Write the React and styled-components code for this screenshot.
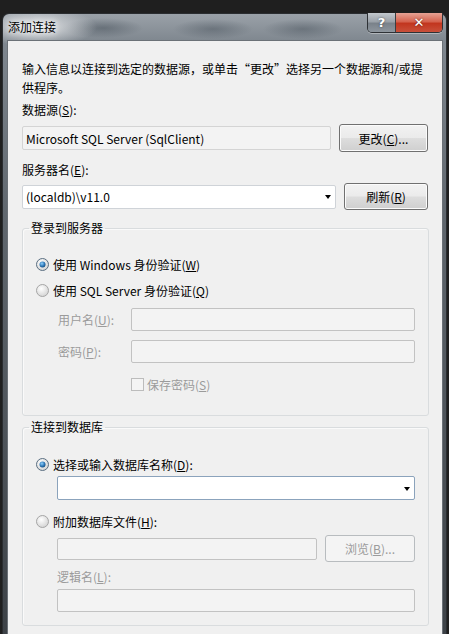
import React from 'react';
import styled, { createGlobalStyle } from 'styled-components';

const GlobalStyle = createGlobalStyle`
    html, body {
        margin: 0;
        padding: 0;
        background: #1f1f1f;
    }
    body {
        width: 449px;
        height: 634px;
        overflow: hidden;
        font-family: 'Noto Sans CJK SC', sans-serif;
        font-size: 12px;
        color: #000;
    }
    * {
        box-sizing: border-box;
    }
`;

const Window = styled.div`
    margin: 13px 0 0 2px;
    width: 445px;
    height: 621px;
    display: flex;
    flex-direction: column;
    border: 1px solid #2a2d30;
    border-bottom: none;
    border-radius: 7px 7px 0 0;
    padding: 0 3px 0 4px;
    background:
        radial-gradient(ellipse 60px 20px at 34px 13px, rgba(232, 234, 236, 0.95), rgba(232, 234, 236, 0)),
        radial-gradient(ellipse 40px 10px at 100px 14px, rgba(60, 70, 80, 0.45), rgba(60, 70, 80, 0)),
        radial-gradient(ellipse 40px 10px at 210px 15px, rgba(60, 70, 80, 0.4), rgba(60, 70, 80, 0)),
        radial-gradient(ellipse 40px 10px at 300px 15px, rgba(60, 70, 80, 0.4), rgba(60, 70, 80, 0)),
        linear-gradient(to bottom, #9aa1a8 0px, #7f878f 27px, #60676e 200px, #3d4247 100%);
`;

const TitleBar = styled.div`
    height: 26px;
    flex: none;
    display: flex;
    justify-content: space-between;
    align-items: flex-start;
`;

const Title = styled.div`
    padding-left: 1px;
    line-height: 26px;
    font-size: 12px;
    color: #000;
    text-shadow: 0 0 6px #fff, 0 0 10px rgba(255, 255, 255, 0.9);
`;

const CaptionButtons = styled.div`
    display: flex;
    margin-top: -1px;
    border: 1px solid #2e3236;
    border-top: none;
    border-radius: 0 0 5px 5px;
    overflow: hidden;
    box-shadow: 0 1px 0 rgba(255, 255, 255, 0.35);
`;

const CaptionButton = styled.div`
    width: ${props => props.width}px;
    height: 19px;
    display: flex;
    align-items: center;
    justify-content: center;
    color: #fff;
    font-family: 'DejaVu Sans', sans-serif;
    font-weight: bold;
    font-size: 13px;
    text-shadow: 0 0 2px rgba(0, 0, 0, 0.6);
    background: ${props => props.close
        ? 'linear-gradient(to bottom, #e6a294 0%, #d5634f 45%, #c2361f 55%, #c9503a 100%)'
        : 'linear-gradient(to bottom, #c3c8cd 0%, #9ba2a9 45%, #7a828a 55%, #8e969e 100%)'};
    border-left: ${props => props.close ? '1px solid #3a3e42' : 'none'};
`;

const Content = styled.div`
    flex: 1;
    background: #f0f0f0;
    border: 1px solid #6b7177;
    border-bottom: none;
    padding: 18px 14px 0;
    overflow: hidden;
`;

const Intro = styled.p`
    margin: 0;
    line-height: 19px;
    white-space: nowrap;
`;

const Label = styled.div`
    margin-top: ${props => props.top || 0}px;
    margin-left: ${props => props.indent || 0}px;
    line-height: 16px;
    color: ${props => props.disabled ? '#9b9b9b' : '#000'};
    white-space: nowrap;
`;

const Row = styled.div`
    display: flex;
    align-items: center;
    gap: 8px;
    height: ${props => props.height}px;
    margin-top: ${props => props.top || 0}px;
    margin-left: ${props => props.indent || 0}px;
`;

const TextBox = styled.div`
    width: ${props => props.width ? `${props.width}px` : 'auto'};
    flex: ${props => props.width ? 'none' : '1'};
    height: ${props => props.height || 24}px;
    display: flex;
    align-items: center;
    padding: 0 3px;
    border: 1px solid ${props => props.border || '#d4d4d4'};
    border-radius: 2px;
    background: ${props => props.bg || '#f3f3f3'};
    white-space: nowrap;
    margin-left: ${props => props.indent || 0}px;
    margin-top: ${props => props.top || 0}px;
`;

const ComboBox = styled(TextBox)`
    justify-content: space-between;
    padding-right: 4px;
`;

const Arrow = styled.span`
    width: 0;
    height: 0;
    border-left: 3.5px solid transparent;
    border-right: 3.5px solid transparent;
    border-top: 4px solid #000;
    margin-top: 1px;
`;

const Button = styled.div`
    width: ${props => props.width}px;
    height: ${props => props.height || 28}px;
    flex: none;
    display: flex;
    align-items: center;
    justify-content: center;
    border: 1px solid ${props => props.disabled ? '#b8bcbf' : '#707070'};
    border-radius: 3px;
    color: ${props => props.disabled ? '#9b9b9b' : '#000'};
    background: ${props => props.disabled
        ? '#f4f4f4'
        : 'linear-gradient(to bottom, #f2f2f2 0%, #ebebeb 48%, #dddddd 52%, #cfcfcf 100%)'};
    box-shadow: inset 0 0 0 1px ${props => props.disabled ? '#f4f4f4' : '#fbfbfb'};
`;

const GroupBox = styled.fieldset`
    margin: ${props => props.top}px 0 0;
    padding: 0 13px ${props => props.bottom}px;
    min-width: 0;
    width: 407px;
    border: 1px solid #d9dcde;
    border-radius: 3px;
    box-shadow: inset 1px 1px 0 #fafafa;
`;

const Legend = styled.legend`
    margin-left: -7px;
    padding: 0 2px;
    line-height: 16px;
    font-size: 12px;
`;

const RadioRow = styled.label`
    display: flex;
    align-items: center;
    gap: 4px;
    height: 20px;
    margin-top: ${props => props.top || 0}px;
    white-space: nowrap;
`;

const CredGrid = styled.div`
    display: grid;
    grid-template-columns: 73px 1fr;
    align-items: center;
    margin-left: 22px;
    margin-top: ${props => props.top || 0}px;
`;

const CheckRow = styled.div`
    display: flex;
    align-items: center;
    gap: 3px;
    height: 16px;
    margin: 13px 0 0 95px;
    color: #9b9b9b;
    white-space: nowrap;
`;

const CheckBox = styled.span`
    width: 13px;
    height: 13px;
    border: 1px solid #bcbcbc;
    background: #f4f4f4;
`;

const Radio = ({ checked }) => (
    <svg width="13" height="13" viewBox="0 0 13 13">
        <defs>
            <radialGradient id="rfill" cx="0.4" cy="0.35" r="0.7">
                <stop offset="0" stopColor="#ffffff" />
                <stop offset="1" stopColor="#d2d2d2" />
            </radialGradient>
            <radialGradient id="rdot" cx="0.4" cy="0.35" r="0.7">
                <stop offset="0" stopColor="#8fd0fb" />
                <stop offset="0.6" stopColor="#2f78b8" />
                <stop offset="1" stopColor="#134a7a" />
            </radialGradient>
        </defs>
        <circle cx="6.5" cy="6.5" r="6" fill="url(#rfill)" stroke={checked ? '#5b6f82' : '#a5a5a5'} strokeWidth="1" />
        {checked && <circle cx="6.5" cy="6.5" r="3" fill="url(#rdot)" />}
    </svg>
);

const App = () => (
    <>
        <GlobalStyle />
        <Window>
            <TitleBar>
                <Title>添加连接</Title>
                <CaptionButtons>
                    <CaptionButton width={27}>?</CaptionButton>
                    <CaptionButton width={47} close>✕</CaptionButton>
                </CaptionButtons>
            </TitleBar>
            <Content>
                <Intro>
                    输入信息以连接到选定的数据源，或单击“更改”选择另一个数据源和/或提<br />供程序。
                </Intro>
                <Label top={5}>数据源(<u>S</u>):</Label>
                <Row height={28} top={6}>
                    <TextBox width={309}>Microsoft SQL Server (SqlClient)</TextBox>
                    <Button width={89}><span>更改(<u>C</u>)...</span></Button>
                </Row>
                <Label top={10}>服务器名(<u>E</u>):</Label>
                <Row height={27} top={5}>
                    <ComboBox width={314} bg="#fff" border="#cfd3d8">
                        <span>(localdb)\v11.0</span>
                        <Arrow />
                    </ComboBox>
                    <Button width={84} height={27}><span>刷新(<u>R</u>)</span></Button>
                </Row>

                <GroupBox top={10} bottom={23}>
                    <Legend>登录到服务器</Legend>
                    <RadioRow top={18}>
                        <Radio checked />
                        <span>使用 Windows 身份验证(<u>W</u>)</span>
                    </RadioRow>
                    <RadioRow top={6}>
                        <Radio />
                        <span>使用 SQL Server 身份验证(<u>Q</u>)</span>
                    </RadioRow>
                    <CredGrid top={8}>
                        <Label disabled>用户名(<u>U</u>):</Label>
                        <TextBox height={23} border="#c2c2c2">&nbsp;</TextBox>
                    </CredGrid>
                    <CredGrid top={9}>
                        <Label disabled>密码(<u>P</u>):</Label>
                        <TextBox height={23} border="#c2c2c2">&nbsp;</TextBox>
                    </CredGrid>
                    <CheckRow>
                        <CheckBox />
                        <span>保存密码(<u>S</u>)</span>
                    </CheckRow>
                </GroupBox>

                <GroupBox top={3} bottom={13}>
                    <Legend>连接到数据库</Legend>
                    <RadioRow top={19}>
                        <Radio checked />
                        <span>选择或输入数据库名称(<u>D</u>):</span>
                    </RadioRow>
                    <ComboBox indent={21} top={2} bg="#fff" border="#8ba3bc">
                        <span />
                        <Arrow />
                    </ComboBox>
                    <RadioRow top={11}>
                        <Radio />
                        <span>附加数据库文件(<u>H</u>):</span>
                    </RadioRow>
                    <Row height={27} top={4} indent={21}>
                        <TextBox height={22} border="#c2c2c2">&nbsp;</TextBox>
                        <Button width={90} height={27} disabled><span>浏览(<u>B</u>)...</span></Button>
                    </Row>
                    <Label top={7} indent={21} disabled>逻辑名(<u>L</u>):</Label>
                    <TextBox height={23} indent={21} top={4} border="#c2c2c2">&nbsp;</TextBox>
                </GroupBox>
            </Content>
        </Window>
    </>
);

export default App;
